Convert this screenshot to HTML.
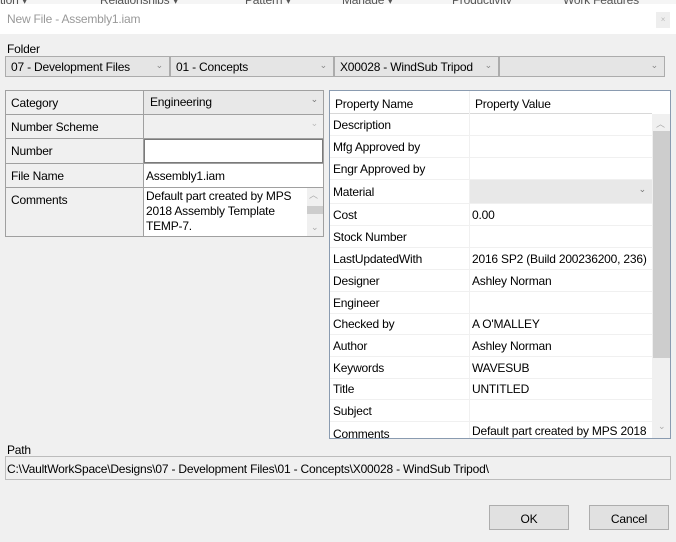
<!DOCTYPE html>
<html><head><meta charset="utf-8"><style>
*{box-sizing:border-box;margin:0;padding:0}
body{width:676px;height:542px;background:#f0f0f0;font-family:"Liberation Sans",sans-serif;font-size:12px;letter-spacing:-0.2px;color:#000;position:relative;overflow:hidden}
.a{position:absolute;white-space:nowrap}
.cb{position:absolute;top:56px;height:21px;background:#e5e5e5;border:1px solid #acacac;padding:3px 0 0 5px;white-space:nowrap}
.cb i{position:absolute;right:6px;top:3px;font-style:normal;color:#888;font-size:9px}
.lt{position:absolute;left:5px;top:90px;width:319px;height:147px;border:1px solid #a0a0a0;background:#f0f0f0}
.lr{position:absolute;left:0;width:317px;border-bottom:1px solid #a0a0a0}
.lr span{position:absolute;left:5px;top:5px;white-space:nowrap}
.rg{position:absolute;left:329px;top:90px;width:342px;height:349px;border:1px solid #8a9bb0;background:#fff;overflow:hidden}
.rr{position:absolute;left:0;width:322px;height:22px;border-bottom:1px solid #f0f0f0;white-space:nowrap}
.rr span{position:absolute;left:3px;top:4px;white-space:nowrap}
.rr b{font-weight:normal;position:absolute;left:142px;top:4px;white-space:nowrap}
.btn{position:absolute;top:505px;width:80px;height:25px;background:#e1e1e1;border:1px solid #adadad;text-align:center;padding-top:6px}
</style></head><body>
<div class="a" style="left:0;top:-7px;width:676px;height:11px;background:#f5f5f5;color:#555;font-size:12px;overflow:hidden"><span class="a" style="left:0;top:0">tion ▾</span><span class="a" style="left:100px;top:0">Relationships ▾</span><span class="a" style="left:245px;top:0">Pattern ▾</span><span class="a" style="left:342px;top:0">Manage ▾</span><span class="a" style="left:452px;top:0">Productivity</span><span class="a" style="left:563px;top:0">Work Features</span></div>
<div class="a" style="left:0;top:4px;width:676px;height:30px;background:#fff"></div>
<div class="a" style="left:7px;top:12px;color:#999;font-size:12px">New File - Assembly1.iam</div>
<div class="a" style="left:656px;top:12px;width:14px;height:16px;background:#eee;color:#bbb;font-size:8px;text-align:center;padding-top:3px">×</div>
<div class="a" style="left:7px;top:42px">Folder</div>
<div class="cb" style="left:5px;width:165px">07 - Development Files<i>⌄</i></div>
<div class="cb" style="left:170px;width:164px">01 - Concepts<i>⌄</i></div>
<div class="cb" style="left:334px;width:165px">X00028 - WindSub Tripod<i>⌄</i></div>
<div class="cb" style="left:499px;width:166px"><i>⌄</i></div>
<div class="lt">
<div class="lr" style="top:0;height:24px"><span>Category</span></div>
<div class="lr" style="top:24px;height:24px"><span>Number Scheme</span></div>
<div class="lr" style="top:48px;height:25px"><span>Number</span></div>
<div class="lr" style="top:73px;height:24px"><span>File Name</span></div>
<div class="lr" style="top:97px;height:48px;border:none"><span>Comments</span></div>
<div class="a" style="left:137px;top:0;width:1px;height:145px;background:#a0a0a0"></div>
<div class="a" style="left:138px;top:0;width:179px;height:23px;background:#e8e8e8;padding:4px 0 0 6px">Engineering<span class="a" style="right:5px;top:3px;color:#777;font-size:9px">⌄</span></div>
<div class="a" style="left:138px;top:24px;width:179px;height:23px;background:#f0f0f0"><span class="a" style="right:5px;top:3px;color:#bbb;font-size:9px">⌄</span></div>
<div class="a" style="left:138px;top:48px;width:179px;height:24px;background:#fff;border:1px solid #7a7a7a"></div>
<div class="a" style="left:138px;top:73px;width:179px;height:23px;background:#fff;padding:5px 0 0 2px">Assembly1.iam</div>
<div class="a" style="left:138px;top:97px;width:179px;height:48px;background:#fff;padding:1px 0 0 2px;line-height:15px">Default part created by MPS<br>2018 Assembly Template<br>TEMP-7.</div>
<div class="a" style="left:301px;top:97px;width:16px;height:48px;background:#f0f0f0"><div class="a" style="left:2px;top:0;color:#aaa;font-size:9px">︿</div><div class="a" style="left:0;top:18px;width:16px;height:8px;background:#cdcdcd"></div><div class="a" style="left:4px;top:34px;color:#aaa;font-size:9px">⌄</div></div>
</div>
<div class="rg">
<div class="a" style="left:0;top:0;width:322px;height:23px;background:#fff;border-bottom:1px solid #d8d8d8"><span class="a" style="left:5px;top:6px">Property Name</span><span class="a" style="left:145px;top:6px">Property Value</span></div>
<div class="a" style="left:139px;top:0;width:1px;height:349px;background:#f0f0f0"></div>
<div class="rr" style="top:23px"><span>Description</span></div>
<div class="rr" style="top:45px"><span>Mfg Approved by</span></div>
<div class="rr" style="top:67px"><span>Engr Approved by</span></div>
<div class="rr" style="top:89px;height:24px"><span style="top:5px">Material</span><div class="a" style="left:140px;top:0;width:182px;height:23px;background:#e8e8e8"><span style="left:auto;right:6px;color:#777;font-size:9px">⌄</span></div></div>
<div class="rr" style="top:113px"><span>Cost</span><b>0.00</b></div>
<div class="rr" style="top:135px"><span>Stock Number</span></div>
<div class="rr" style="top:157px"><span>LastUpdatedWith</span><b>2016 SP2 (Build 200236200, 236)</b></div>
<div class="rr" style="top:179px"><span>Designer</span><b>Ashley Norman</b></div>
<div class="rr" style="top:201px"><span>Engineer</span></div>
<div class="rr" style="top:222px"><span>Checked by</span><b>A O'MALLEY</b></div>
<div class="rr" style="top:244px"><span>Author</span><b>Ashley Norman</b></div>
<div class="rr" style="top:266px"><span>Keywords</span><b>WAVESUB</b></div>
<div class="rr" style="top:287px"><span>Title</span><b>UNTITLED</b></div>
<div class="rr" style="top:309px"><span>Subject</span></div>
<div class="rr" style="top:331px"><span style="top:5px">Comments</span><b style="top:2px">Default part created by MPS 2018</b></div>
<div class="a" style="left:322px;top:23px;width:18px;height:324px;background:#f0f0f0"><div class="a" style="left:4px;top:3px;color:#aaa;font-size:9px">︿</div><div class="a" style="left:1px;top:17px;width:17px;height:227px;background:#cdcdcd"></div><div class="a" style="left:6px;top:307px;color:#aaa;font-size:9px">⌄</div></div>
</div>
<div class="a" style="left:7px;top:443px">Path</div>
<div class="a" style="left:5px;top:456px;width:666px;height:24px;border:1px solid #bcbcbc;background:#f0f0f0;padding:5px 0 0 1px">C:\VaultWorkSpace\Designs\07 - Development Files\01 - Concepts\X00028 - WindSub Tripod\</div>
<div class="btn" style="left:489px">OK</div>
<div class="btn" style="left:589px">Cancel</div>
</body></html>
